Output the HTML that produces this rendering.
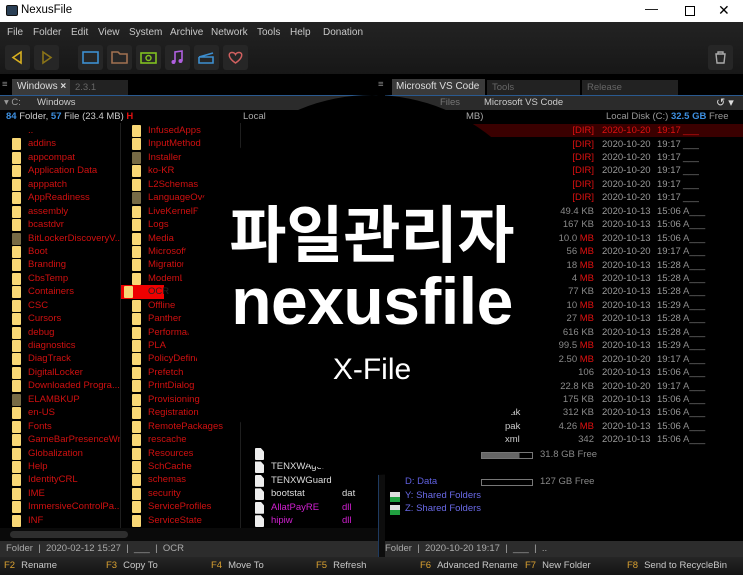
<!DOCTYPE html>
<html><head><meta charset="utf-8"><style>
*{margin:0;padding:0;box-sizing:border-box}
body{width:743px;height:575px;overflow:hidden;background:#000;font-family:"Liberation Sans","Noto Sans CJK KR",sans-serif;font-size:9.5px;color:#ccc;position:relative}
.a{position:absolute}
.title{left:0;top:0;width:743px;height:22px;background:#fff;color:#000;font-size:11.5px}
.menu{left:0;top:22px;width:743px;height:52px;background:linear-gradient(#232323,#171717)}
.menu span{position:absolute;top:5px;color:#c8c8c8;font-size:10px}
.btn{position:absolute;top:45px;width:25px;height:25px;background:#262626;border-radius:3px}
.col{position:absolute;top:124px}
.col div{height:13.45px;line-height:13.45px;white-space:nowrap;overflow:hidden;position:relative;padding-left:20px;color:#d01010}
.col div:before{content:"";position:absolute;left:4px;top:1px;width:9px;height:12px;background:#f8d775;border-radius:1px}
.col div.h:before{background:#776a45}
.col div.f:before{background:#eee;clip-path:polygon(0 0,65% 0,100% 30%,100% 100%,0 100%)}
.col div.n:before{display:none}
.rr{position:absolute;left:385px;width:358px;height:13.45px;line-height:13.45px}
.rr span{position:absolute;white-space:nowrap}
.sz{right:149px;text-align:right;color:#8a8a8a}
.dt{left:217px;color:#9a9a9a}
.tm{left:272px;color:#9a9a9a}
.at{left:298px;color:#888}
.m{color:#e01010}
.status{top:541px;height:16px;background:#2c2c2c;color:#aaa;font-size:9.5px;line-height:16px}
.fk{left:0;top:557px;width:743px;height:18px;background:linear-gradient(#262626,#141414);font-size:9.5px;line-height:18px}
.fk span{position:absolute;color:#c8c8c8}
.fk b{color:#d9a030;font-weight:normal;margin-right:6px}
</style></head><body>
<div class="a title"><div class="a" style="left:6px;top:5px;width:12px;height:11px;background:#2a3f55;border-radius:2px;border:1px solid #111"></div><span class="a" style="left:21px;top:4px">NexusFile</span>
<span class="a" style="left:645px;top:1px;font-size:13px">—</span><div class="a" style="left:685px;top:6px;width:10px;height:10px;border:1px solid #000"></div><span class="a" style="left:718px;top:2px;font-size:14px">✕</span></div>
<div class="a menu">
<span style="left:7px">File</span><span style="left:33px">Folder</span><span style="left:71px">Edit</span><span style="left:98px">View</span><span style="left:129px">System</span><span style="left:170px">Archive</span><span style="left:211px">Network</span><span style="left:257px">Tools</span><span style="left:290px">Help</span><span style="left:323px">Donation</span>
</div>
<div class="btn" style="left:5px"><svg width="25" height="25"><path d="M16 7 L8 12.5 L16 18Z" fill="none" stroke="#d8b020" stroke-width="1.6"/></svg></div>
<div class="btn" style="left:34px"><svg width="25" height="25"><path d="M9 7 L17 12.5 L9 18Z" fill="none" stroke="#8a7418" stroke-width="1.6"/></svg></div>
<div class="btn" style="left:78px"><svg width="25" height="25"><rect x="5" y="7" width="15" height="11" fill="none" stroke="#3d8fd0" stroke-width="1.6"/></svg></div>
<div class="btn" style="left:107px"><svg width="25" height="25"><path d="M5 7h6l2 2h7v9H5Z" fill="none" stroke="#a07050" stroke-width="1.6"/></svg></div>
<div class="btn" style="left:136px"><svg width="25" height="25"><rect x="5" y="8" width="15" height="10" fill="none" stroke="#80c020" stroke-width="1.6"/><circle cx="12.5" cy="13" r="2.5" fill="none" stroke="#80c020" stroke-width="1.5"/></svg></div>
<div class="btn" style="left:165px"><svg width="25" height="25"><path d="M10 17V7l7-1v10" fill="none" stroke="#b060e0" stroke-width="1.6"/><circle cx="8.5" cy="17" r="2" fill="#b060e0"/><circle cx="15.5" cy="16" r="2" fill="#b060e0"/></svg></div>
<div class="btn" style="left:194px"><svg width="25" height="25"><path d="M5 12L19 8M5 12v6h14v-6H5" fill="none" stroke="#3d8fd0" stroke-width="1.6"/></svg></div>
<div class="btn" style="left:223px"><svg width="25" height="25"><path d="M12.5 18C5 13 5 8 8.5 7.5 10.5 7.2 12 8.5 12.5 9.5 13 8.5 14.5 7.2 16.5 7.5 20 8 20 13 12.5 18Z" fill="none" stroke="#d06060" stroke-width="1.5"/></svg></div>
<div class="btn" style="left:708px;top:45px"><svg width="25" height="25"><path d="M8 9h9l-1 9H9Z M10 9V7h5v2" fill="none" stroke="#aaa" stroke-width="1.4"/></svg></div>

<span class="a" style="left:2px;top:79px;color:#888">≡</span>
<div class="a" style="left:12px;top:79px;width:58px;height:16px;background:#3a3a3a;color:#ddd;padding-left:5px;line-height:16px;font-size:10px">Windows <b style="color:#ddd">×</b></div>
<div class="a" style="left:70px;top:80px;width:58px;height:15px;background:#222;color:#666;padding-left:5px;line-height:15px">2.3.1</div>
<div class="a" style="left:0;top:95px;width:378px;height:15px;background:#2b2b2b;border-top:1px solid #2a5a90;clip-path:polygon(0 0,100% 0,100% 0,82% 100%,0 100%)"></div>
<span class="a" style="left:4px;top:97px;color:#999">▾ C:</span><span class="a" style="left:37px;top:97px;color:#ccc">Windows</span>
<div class="a" style="left:0;top:110px;width:378px;height:13px;line-height:13px;padding-left:6px"><b style="color:#3d8fe0">84</b> Folder, <b style="color:#3d8fe0">57</b> File (23.4 MB) <b style="color:#e01010">H</b></div>
<span class="a" style="left:243px;top:111px;color:#aaa">Local</span>

<span class="a" style="left:378px;top:79px;color:#888">≡</span>
<div class="a" style="left:392px;top:79px;width:93px;height:16px;background:#3a3a3a;color:#ddd;padding-left:4px;line-height:16px;font-size:10px">Microsoft VS Code <b>×</b></div>
<div class="a" style="left:487px;top:80px;width:93px;height:15px;background:#222;color:#666;padding-left:5px;line-height:15px">Tools</div>
<div class="a" style="left:582px;top:80px;width:96px;height:15px;background:#222;color:#666;padding-left:5px;line-height:15px">Release</div>
<div class="a" style="left:385px;top:95px;width:358px;height:15px;background:#2b2b2b;border-top:1px solid #2a5a90"></div>
<span class="a" style="left:440px;top:97px;color:#777">Files</span><span class="a" style="left:484px;top:97px;color:#ccc">Microsoft VS Code</span>
<span class="a" style="left:716px;top:96px;color:#ddd;font-size:11px">↺ ▾</span>
<span class="a" style="left:466px;top:111px;color:#aaa">MB)</span>
<div class="a" style="left:606px;top:110px;line-height:13px;color:#999">Local Disk (C:) <b style="color:#3d8fe0">32.5 GB</b> Free</div>

<div class="col" style="left:8px;width:112px">
<div class="n" style="color:#d01010">..</div><div>addins</div><div>appcompat</div><div>Application Data</div><div>apppatch</div><div>AppReadiness</div><div>assembly</div><div>bcastdvr</div><div class="h">BitLockerDiscoveryV...</div><div>Boot</div><div>Branding</div><div>CbsTemp</div><div>Containers</div><div>CSC</div><div>Cursors</div><div>debug</div><div>diagnostics</div><div>DiagTrack</div><div>DigitalLocker</div><div>Downloaded Progra...</div><div class="h">ELAMBKUP</div><div>en-US</div><div>Fonts</div><div>GameBarPresenceWr...</div><div>Globalization</div><div>Help</div><div>IdentityCRL</div><div>IME</div><div>ImmersiveControlPa...</div><div>INF</div>
</div>
<div class="col" style="left:128px;width:112px">
<div>InfusedApps</div><div>InputMethod</div><div class="h">Installer</div><div>ko-KR</div><div>L2Schemas</div><div class="h">LanguageOverlay</div><div>LiveKernelReports</div><div>Logs</div><div>Media</div><div>Microsoft.NET</div><div>Migration</div><div>ModemLogs</div><div style="background:linear-gradient(90deg,#e00 0,#e00 44px,transparent 44px);margin-left:-8px;padding-left:28px;color:#222">OCR</div><div>Offline</div><div>Panther</div><div>Performance</div><div>PLA</div><div>PolicyDefinitions</div><div>Prefetch</div><div>PrintDialog</div><div>Provisioning</div><div>Registration</div><div>RemotePackages</div><div>rescache</div><div>Resources</div><div>SchCache</div><div>schemas</div><div>security</div><div>ServiceProfiles</div><div>ServiceState</div>
</div>
<div class="col" style="left:251px;width:110px;top:447px">
<div class="f"></div><div class="f" style="color:#ddd">TENXWAgent</div><div class="f" style="color:#ddd">TENXWGuard</div><div class="f" style="color:#ddd">bootstat<span class="a" style="left:91px">dat</span></div><div class="f" style="color:#d020d0">AllatPayRE<span class="a" style="left:91px">dll</span></div><div class="f" style="color:#d020d0">hipiw<span class="a" style="left:91px">dll</span></div>
</div>
<div class="a" style="left:240px;top:123px;width:1px;height:412px;background:#1e1e1e"></div>
<div class="a" style="left:120px;top:123px;width:1px;height:412px;background:#1e1e1e"></div>

<div class="a" style="left:385px;top:124px;width:358px;height:13px;background:#3a0000"></div>
<div class="rr" style="top:124px"><span class="sz m">[DIR]</span><span class="dt m">2020-10-20</span><span class="tm m">19:17</span><span class="at m">___</span></div>
<div class="rr" style="top:137.5px"><span class="sz m">[DIR]</span><span class="dt">2020-10-20</span><span class="tm">19:17</span><span class="at">___</span></div>
<div class="rr" style="top:151px"><span class="sz m">[DIR]</span><span class="dt">2020-10-20</span><span class="tm">19:17</span><span class="at">___</span></div>
<div class="rr" style="top:164.4px"><span class="sz m">[DIR]</span><span class="dt">2020-10-20</span><span class="tm">19:17</span><span class="at">___</span></div>
<div class="rr" style="top:177.8px"><span class="sz m">[DIR]</span><span class="dt">2020-10-20</span><span class="tm">19:17</span><span class="at">___</span></div>
<div class="rr" style="top:191.3px"><span class="sz m">[DIR]</span><span class="dt">2020-10-20</span><span class="tm">19:17</span><span class="at">___</span></div>
<div class="rr" style="top:204.7px"><span class="sz">49.4 KB</span><span class="dt">2020-10-13</span><span class="tm">15:06</span><span class="at">A___</span></div>
<div class="rr" style="top:218.2px"><span class="sz">167 KB</span><span class="dt">2020-10-13</span><span class="tm">15:06</span><span class="at">A___</span></div>
<div class="rr" style="top:231.6px"><span class="sz">10.0 <i class="m" style="font-style:normal">MB</i></span><span class="dt">2020-10-13</span><span class="tm">15:06</span><span class="at">A___</span></div>
<div class="rr" style="top:245px"><span class="sz">56 <i class="m" style="font-style:normal">MB</i></span><span class="dt">2020-10-20</span><span class="tm">19:17</span><span class="at">A___</span></div>
<div class="rr" style="top:258.5px"><span class="sz">18 <i class="m" style="font-style:normal">MB</i></span><span class="dt">2020-10-13</span><span class="tm">15:28</span><span class="at">A___</span></div>
<div class="rr" style="top:272px"><span class="sz">4 <i class="m" style="font-style:normal">MB</i></span><span class="dt">2020-10-13</span><span class="tm">15:28</span><span class="at">A___</span></div>
<div class="rr" style="top:285.4px"><span class="sz">77 KB</span><span class="dt">2020-10-13</span><span class="tm">15:28</span><span class="at">A___</span></div>
<div class="rr" style="top:298.8px"><span class="sz">10 <i class="m" style="font-style:normal">MB</i></span><span class="dt">2020-10-13</span><span class="tm">15:29</span><span class="at">A___</span></div>
<div class="rr" style="top:312.3px"><span class="sz">27 <i class="m" style="font-style:normal">MB</i></span><span class="dt">2020-10-13</span><span class="tm">15:28</span><span class="at">A___</span></div>
<div class="rr" style="top:325.7px"><span class="sz">616 KB</span><span class="dt">2020-10-13</span><span class="tm">15:28</span><span class="at">A___</span></div>
<div class="rr" style="top:339.2px"><span class="sz">99.5 <i class="m" style="font-style:normal">MB</i></span><span class="dt">2020-10-13</span><span class="tm">15:29</span><span class="at">A___</span></div>
<div class="rr" style="top:352.6px"><span class="sz">2.50 <i class="m" style="font-style:normal">MB</i></span><span class="dt">2020-10-20</span><span class="tm">19:17</span><span class="at">A___</span></div>
<div class="rr" style="top:366px"><span class="sz">106</span><span class="dt">2020-10-13</span><span class="tm">15:06</span><span class="at">A___</span></div>
<div class="rr" style="top:379.5px"><span style="left:120px;color:#ccc">png</span><span class="sz">22.8 KB</span><span class="dt">2020-10-20</span><span class="tm">19:17</span><span class="at">A___</span></div>
<div class="rr" style="top:393px"><span style="left:120px;color:#ccc">pak</span><span class="sz">175 KB</span><span class="dt">2020-10-13</span><span class="tm">15:06</span><span class="at">A___</span></div>
<div class="rr" style="top:406.4px"><span style="left:120px;color:#ccc">pak</span><span class="sz">312 KB</span><span class="dt">2020-10-13</span><span class="tm">15:06</span><span class="at">A___</span></div>
<div class="rr" style="top:419.8px"><span style="left:120px;color:#ccc">pak</span><span class="sz">4.26 <i class="m" style="font-style:normal">MB</i></span><span class="dt">2020-10-13</span><span class="tm">15:06</span><span class="at">A___</span></div>
<div class="rr" style="top:433.3px"><span style="left:50px;color:#ccc">.manifest</span><span style="left:120px;color:#ccc">xml</span><span class="sz">342</span><span class="dt">2020-10-13</span><span class="tm">15:06</span><span class="at">A___</span></div>
<div class="a" style="left:481px;top:452px;width:52px;height:7px;border:1px solid #777;background:linear-gradient(90deg,#666 75%,#000 75%)"></div>
<span class="a" style="left:540px;top:449px;color:#888">31.8 GB Free</span>
<div class="a" style="left:481px;top:479px;width:52px;height:7px;border:1px solid #777"></div>
<span class="a" style="left:540px;top:476px;color:#888">127 GB Free</span>
<span class="a" style="left:405px;top:476px;color:#6060e0">D: Data</span>
<div class="a" style="left:390px;top:492px;width:10px;height:10px;background:linear-gradient(#ddd 50%,#20a040 50%)"></div>
<span class="a" style="left:405px;top:490px;color:#6a6ae8">Y: Shared Folders</span>
<div class="a" style="left:390px;top:505px;width:10px;height:10px;background:linear-gradient(#ddd 50%,#20a040 50%)"></div>
<span class="a" style="left:405px;top:503px;color:#6a6ae8">Z: Shared Folders</span>

<div class="a" style="left:0;top:528px;width:378px;height:13px;background:#0a0a0a"></div>
<div class="a" style="left:10px;top:531px;width:118px;height:7px;background:#2e2e2e;border-radius:4px"></div>
<div class="a" style="left:378px;top:123px;width:7px;height:434px;background:#0d0d0d;border-left:1px solid #1e3a60"></div>
<div class="a status" style="left:0;width:378px;padding-left:6px">Folder &nbsp;| &nbsp;2020-02-12 15:27 &nbsp;| &nbsp;___ &nbsp;| &nbsp;OCR</div>
<div class="a status" style="left:385px;width:358px;padding-left:0">Folder &nbsp;| &nbsp;2020-10-20 19:17 &nbsp;| &nbsp;___ &nbsp;| &nbsp;..</div>
<div class="a fk"><span style="left:4px"><b>F2</b>Rename</span><span style="left:106px"><b>F3</b>Copy To</span><span style="left:211px"><b>F4</b>Move To</span><span style="left:316px"><b>F5</b>Refresh</span><span style="left:420px"><b>F6</b>Advanced Rename</span><span style="left:525px"><b>F7</b>New Folder</span><span style="left:627px"><b>F8</b>Send to RecycleBin</span></div>

<div class="a" style="left:182px;top:95px;width:380px;height:380px;border-radius:50%;background:#000"></div>
<div class="a" style="left:172px;top:195px;width:400px;text-align:center;color:#fff;font-family:'Noto Sans CJK KR',sans-serif;font-weight:bold;font-size:62px;line-height:70px">파일관리자</div>
<div class="a" style="left:182px;top:266px;width:380px;text-align:center;color:#fff;font-weight:bold;font-size:66px;line-height:70px;letter-spacing:-0.5px">nexusfile</div>
<div class="a" style="left:182px;top:350px;width:380px;text-align:center;color:#fff;font-size:30px;line-height:40px">X-File</div>
</body></html>
